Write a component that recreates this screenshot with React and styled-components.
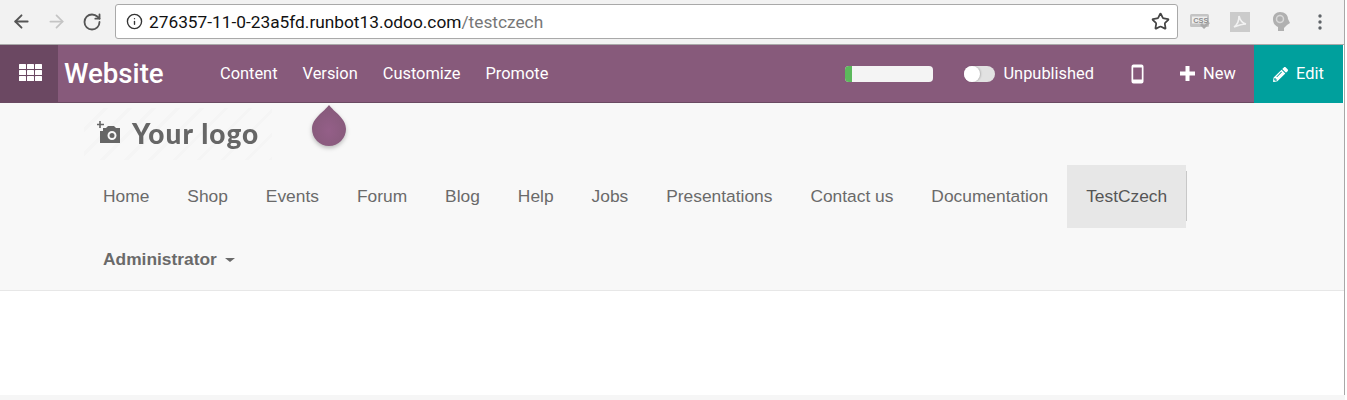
import React from 'react';
import styled, { createGlobalStyle } from 'styled-components';
import { ArrowLeft, ArrowRight, RotateCw, Info, Star } from 'lucide-react';
import { FaPencilAlt } from 'react-icons/fa';

const Global = createGlobalStyle`
  html, body { margin: 0; padding: 0; background: #fff; overflow: hidden; }
  * { box-sizing: border-box; }
`;

const Page = styled.div`
  width: 1347px;
  height: 400px;
  display: flex;
  flex-direction: column;
  background: #fff;
`;
const Window = styled.div`
  width: 1345px;
  height: 395px;
  border-right: 1px solid #a8a8a8;
  display: flex;
  flex-direction: column;
  background: #fff;
`;
const BottomStrip = styled.div`
  width: 1345px;
  height: 5px;
  background: #f6f6f6;
`;
const BrowserBar = styled.div`
  height: 45px;
  background: #f2f2f2;
  border-bottom: 1px solid #a9a9a9;
  display: flex;
  align-items: center;
  padding: 0 12px 1px 0;
  flex-shrink: 0;
`;
const NavButtons = styled.div`
  width: 115px;
  display: flex;
  align-items: center;
  gap: 14px;
  padding-left: 11px;
  color: #555;
  & > svg:last-child { margin-left: 1px; }
`;
const AddressBar = styled.div`
  width: 1063px;
  height: 35px;
  background: #fff;
  border: 1px solid #a9a9a9;
  border-radius: 3px;
  display: flex;
  align-items: center;
  padding: 0 7px 0 10px;
  color: #333;
`;
const Url = styled.span`
  flex: 1;
  margin-left: 6px;
  font: 400 17.3px/20px Roboto, sans-serif;
  color: #111;
  white-space: nowrap;
`;
const UrlPath = styled.span`
  color: #777;
`;
const Extensions = styled.div`
  flex: 1;
  display: flex;
  align-items: center;
  gap: 14px;
  padding-left: 12px;
`;
const Ext = styled.svg`
  flex-shrink: 0;
  display: block;
  margin-left: ${p => p.$ml || 0}px;
`;
const BadgeText = styled.text`
  font: 700 7.5px "Liberation Sans", sans-serif;
  fill: #8f8f8f;
`;

const Navbar = styled.div`
  height: 58px;
  flex-shrink: 0;
  margin-right: 1px;
  background: #875a7b;
  border-bottom: 1px solid #6a4a62;
  display: flex;
  align-items: center;
  color: #fff;
  font: 400 16.4px/20px Roboto, sans-serif;
`;
const AppsButton = styled.div`
  width: 58px;
  height: 100%;
  background: #6b4862;
  display: flex;
  align-items: center;
  justify-content: center;
  padding: 0 0 3px 3px;
`;
const Brand = styled.div`
  font: 500 27.7px/34px Roboto, sans-serif;
  margin-left: 6px;
  width: 156px;
`;
const Menu = styled.div`
  display: flex;
  gap: 25px;
  flex: 1;
`;
const Progress = styled.div`
  width: 88px;
  height: 16px;
  background: #f4f4f4;
  border-radius: 4px;
  overflow: hidden;
  margin-right: 31px;
`;
const ProgressFill = styled.div`
  height: 100%;
  background: #5cb85c;
`;
const Toggle = styled.div`
  width: 31px;
  height: 16px;
  border-radius: 8px;
  background: #e2e2e2;
  position: relative;
  margin-right: 8px;
`;
const Knob = styled.div`
  position: absolute;
  left: 0;
  top: 0;
  width: 16px;
  height: 16px;
  border-radius: 50%;
  background: #fff;
  box-shadow: 1px 0 2px rgba(0, 0, 0, 0.2);
`;
const Label = styled.span`
  margin-right: 37px;
`;
const PhoneIcon = styled.svg`
  margin-right: 36px;
  display: block;
`;
const NewButton = styled.div`
  display: flex;
  align-items: center;
  gap: 8px;
  width: 74px;
`;
const EditButton = styled.div`
  width: 89px;
  height: 58px;
  margin-bottom: -1px;
  background: #00a09d;
  display: flex;
  align-items: center;
  gap: 8px;
  padding-left: 19px;
`;

const Header = styled.header`
  height: 188px;
  flex-shrink: 0;
  background: #f8f8f8;
  border-bottom: 1px solid #e7e7e7;
  padding-left: 84px;
`;
const LogoRow = styled.div`
  height: 62px;
  display: flex;
  align-items: flex-start;
`;
const Logo = styled.div`
  width: 188px;
  height: 52px;
  margin-top: 5px;
  display: flex;
  align-items: center;
  padding: 0 0 3px 13px;
  gap: 11px;
  color: #666;
  background: repeating-linear-gradient(135deg, #f8f8f8 0 14px, #f5f5f5 14px 17px);
`;
const LogoText = styled.span`
  font: 900 28px/32px Lato, sans-serif;
  letter-spacing: 1.05px;
  filter: blur(0.4px);
  white-space: nowrap;
`;
const Droplet = styled.svg`
  margin: 1px 0 0 39px;
  display: block;
  filter: drop-shadow(0 2px 2px rgba(0, 0, 0, 0.25));
`;
const Nav = styled.nav`
  display: flex;
  flex-wrap: wrap;
  width: 1160px;
`;
const NavItem = styled.a`
  position: relative;
  height: 63px;
  padding: 0 19px 2px;
  display: flex;
  align-items: center;
  gap: 8px;
  font: ${p => (p.$bold ? 700 : 400)} 17.36px/22px "Liberation Sans", sans-serif;
  color: ${p => (p.$active ? '#555' : '#6a6a6a')};
  background: ${p => (p.$active ? '#e7e7e7' : 'transparent')};
  ${p => p.$active && `
    &::after {
      content: '';
      position: absolute;
      right: -1px;
      top: 6px;
      bottom: 7px;
      width: 1px;
      background: #c8c8c8;
    }
  `}
`;
const Caret = styled.span`
  width: 0;
  height: 0;
  border-left: 5px solid transparent;
  border-right: 5px solid transparent;
  border-top: 4px solid #6a6a6a;
  margin-top: 2px;
`;

const items = ['Home', 'Shop', 'Events', 'Forum', 'Blog', 'Help', 'Jobs', 'Presentations', 'Contact us', 'Documentation'];
const gridCells = [0, 1, 2].flatMap(r => [0, 1, 2].map(c => [c * 8, r * 6]));

export default function App() {
  return (
    <Page>
      <Global />
      <Window>
        <BrowserBar>
          <NavButtons>
            <ArrowLeft size={21} strokeWidth={2.2} />
            <ArrowRight size={21} strokeWidth={2} color="#c4c4c4" />
            <RotateCw size={20} strokeWidth={2.2} />
          </NavButtons>
          <AddressBar>
            <Info size={17} strokeWidth={1.9} />
            <Url>276357-11-0-23a5fd.runbot13.odoo.com<UrlPath>/testczech</UrlPath></Url>
            <Star size={19} strokeWidth={2.2} color="#444" />
          </AddressBar>
          <Extensions>
            <Ext width="20" height="20" viewBox="0 0 20 20">
              <rect x="0" y="2" width="19" height="13" rx="1.5" fill="#c4c4c4" />
              <rect x="2" y="4.500" width="15" height="7" fill="#eee" />
              <BadgeText x="3.200" y="10.700">CSS</BadgeText>
              <path d="M10 13l4 4 6-6-2-1-4 3-2-2z" fill="#aaa" />
            </Ext>
            <Ext width="20" height="20" viewBox="0 0 20 20" $ml={6}>
              <rect width="20" height="20" fill="#cbcbcb" />
              <path d="M4 15c3-2 5-6 5-11 1 4 3 7 7 8-4 0-7 1-12 3z" fill="none" stroke="#f2f2f2" strokeWidth="1.6" />
            </Ext>
            <Ext width="20" height="22" viewBox="0 0 20 22" $ml={7}>
              <path d="M9 1c5 0 8 3 8 7l2 4-3 2-3 3v3H7v-4C3 14 2 11 2 8c0-4 3-7 7-7z" fill="#b0b0b0" />
              <circle cx="9" cy="8" r="3.500" fill="none" stroke="#d8d8d8" strokeWidth="1.5" />
            </Ext>
            <Ext width="6" height="18" viewBox="0 0 6 18" $ml={12}>
              <circle cx="3" cy="3" r="1.700" fill="#5f6368" />
              <circle cx="3" cy="9" r="1.700" fill="#5f6368" />
              <circle cx="3" cy="15" r="1.700" fill="#5f6368" />
            </Ext>
          </Extensions>
        </BrowserBar>
        <Navbar>
          <AppsButton>
            <svg width="23" height="17" viewBox="0 0 23 17">
              {gridCells.map(([x, y]) => <rect key={`${x}-${y}`} x={x} y={y} width="7" height="5" rx="0.5" fill="#fff" />)}
            </svg>
          </AppsButton>
          <Brand>Website</Brand>
          <Menu>
            <span>Content</span>
            <span>Version</span>
            <span>Customize</span>
            <span>Promote</span>
          </Menu>
          <Progress><ProgressFill style={{ width: '7%' }} /></Progress>
          <Toggle><Knob /></Toggle>
          <Label>Unpublished</Label>
          <PhoneIcon width="13" height="20" viewBox="0 0 13 20">
            <path fillRule="evenodd" d="M2.500 0.500h8a2 2 0 012 2v15a2 2 0 01-2 2h-8a2 2 0 01-2-2v-15a2 2 0 012-2zm-0.300 3v12h8.600v-12H2.200z" fill="#fff" />
          </PhoneIcon>
          <NewButton>
            <svg width="15" height="15" viewBox="0 0 15 15">
              <path d="M5.500 0h4v5.500H15v4H9.500V15h-4V9.500H0v-4h5.500z" fill="#fff" />
            </svg>
            New
          </NewButton>
          <EditButton><FaPencilAlt size={15} />Edit</EditButton>
        </Navbar>
        <Header>
          <LogoRow>
            <Logo>
              <svg width="24" height="24" viewBox="0 0 24 24">
                <path fillRule="evenodd" d="M6 7h3l2-2h6l2 2h4v15H3V10h3zm9 3a4.500 4.500 0 100 9 4.500 4.500 0 000-9zm0 2a2.500 2.500 0 110 5 2.500 2.500 0 010-5z" fill="#666" />
                <path d="M3 0v7M0 3.500h7" stroke="#666" strokeWidth="1.6" />
              </svg>
              <LogoText>Your logo</LogoText>
            </Logo>
            <Droplet width="36" height="44" viewBox="0 0 36 44">
              <defs>
                <radialGradient id="drop" cx="50%" cy="62%" r="55%">
                  <stop offset="0%" stopColor="#945f88" />
                  <stop offset="100%" stopColor="#875a7b" />
                </radialGradient>
              </defs>
              <path d="M18 1C23 8 35 14 35 25a17 17 0 01-34 0C1 14 13 8 18 1z" fill="url(#drop)" />
            </Droplet>
          </LogoRow>
          <Nav>
            {items.map(i => <NavItem key={i}>{i}</NavItem>)}
            <NavItem $active>TestCzech</NavItem>
            <NavItem $bold>Administrator<Caret /></NavItem>
          </Nav>
        </Header>
      </Window>
      <BottomStrip />
    </Page>
  );
}
